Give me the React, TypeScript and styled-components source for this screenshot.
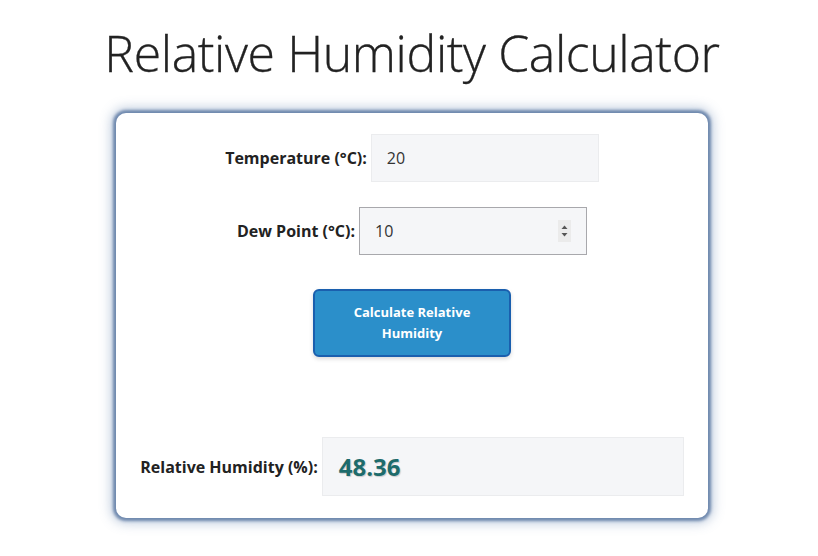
import { useState } from 'react';
import styled, { createGlobalStyle } from 'styled-components';

const GlobalStyle = createGlobalStyle`
  html, body {
    margin: 0;
    padding: 0;
    background: #ffffff;
    font-family: 'Open Sans', 'Noto Sans', Arial, sans-serif;
    color: #222;
  }
  * {
    box-sizing: border-box;
  }
`;

const Page = styled.div`
  min-height: 100vh;
  display: flex;
  flex-direction: column;
  align-items: center;
  padding: 18px 0 30px 6px;
`;

const Title = styled.h1`
  margin: 0 0 25px;
  font-size: 50px;
  font-weight: 300;
  line-height: 70px;
  color: #222;
  letter-spacing: -0.4px;
  -webkit-text-stroke: 0.3px #222;
`;

const Card = styled.div`
  width: 592px;
  padding: 21px 0 22px;
  background: #fff;
  border-radius: 10px;
  box-shadow: 0 0 3px 3px rgba(88, 118, 160, 0.8), 0 0 12px 5px rgba(110, 140, 180, 0.45);
  display: flex;
  flex-direction: column;
  align-items: center;
`;

const FieldRow = styled.div<{ $gap?: number }>`
  display: flex;
  align-items: center;
  justify-content: center;
  gap: 4px;
  margin-bottom: ${(p) => p.$gap ?? 0}px;
`;

const Label = styled.label`
  font-size: 16px;
  font-weight: 700;
  color: #222;
`;

const InputWrap = styled.div`
  position: relative;
`;

const NumberInput = styled.input<{ $outlined?: boolean }>`
  width: 228px;
  height: 48px;
  padding: 0 15px;
  font-family: inherit;
  font-size: 16px;
  color: #333;
  background: #f5f6f8;
  border: 1px solid ${(p) => (p.$outlined ? '#a8a8ac' : '#ebecee')};
  border-radius: 0;
  outline: none;
  -moz-appearance: textfield;

  &::-webkit-inner-spin-button,
  &::-webkit-outer-spin-button {
    -webkit-appearance: none;
    margin: 0;
  }
`;

const Spinner = styled.svg`
  position: absolute;
  right: 16px;
  top: 13px;
  width: 13px;
  height: 22px;
  pointer-events: none;
`;

const CalcButton = styled.button`
  width: 198px;
  height: 68px;
  margin-bottom: 80px;
  padding: 0 30px;
  font-family: inherit;
  font-size: 13px;
  font-weight: 700;
  line-height: 21px;
  color: #fff;
  background: #2b8fca;
  border: 2px solid #1a5fae;
  border-radius: 6px;
  box-shadow: 0 2px 4px rgba(0, 0, 0, 0.15);
  cursor: pointer;
`;

const ResultBox = styled.div`
  width: 362px;
  height: 59px;
  padding: 0 16px;
  display: flex;
  align-items: center;
  background: #f5f6f8;
  border: 1px solid #ebecee;
  font-size: 24px;
  font-weight: 700;
  color: #1d6b6b;
  text-shadow: 1px 1px 1px rgba(0, 0, 0, 0.18);
`;

export default function App() {
  const [temp, setTemp] = useState('20');
  const [dew, setDew] = useState('10');
  const [result, setResult] = useState('48.36');

  const calculate = () => {
    const t = parseFloat(temp);
    const d = parseFloat(dew);
    const es = 6.112 * Math.exp((17.67 * t) / (t + 243.5));
    const e = 6.112 * Math.exp((17.67 * d) / (d + 243.5));
    setResult(((e / es) * 100).toFixed(2));
  };

  return (
    <>
      <GlobalStyle />
      <Page>
        <Title>Relative Humidity Calculator</Title>
        <Card>
          <FieldRow $gap={25}>
            <Label htmlFor="temp">Temperature (°C):</Label>
            <NumberInput id="temp" type="number" value={temp} onChange={(e) => setTemp(e.target.value)} />
          </FieldRow>
          <FieldRow $gap={34}>
            <Label htmlFor="dew">Dew Point (°C):</Label>
            <InputWrap>
              <NumberInput
                id="dew"
                type="number"
                $outlined
                value={dew}
                onChange={(e) => setDew(e.target.value)}
              />
              <Spinner viewBox="0 0 13 22">
                <rect x="0" y="0" width="13" height="22" fill="#ebebeb" />
                <path d="M3.5 9 L6.5 5.5 L9.5 9 Z" fill="#555" />
                <path d="M3.5 13 L6.5 16.5 L9.5 13 Z" fill="#555" />
              </Spinner>
            </InputWrap>
          </FieldRow>
          <CalcButton onClick={calculate}>Calculate Relative Humidity</CalcButton>
          <FieldRow>
            <Label>Relative Humidity (%):</Label>
            <ResultBox>{result}</ResultBox>
          </FieldRow>
        </Card>
      </Page>
    </>
  );
}
